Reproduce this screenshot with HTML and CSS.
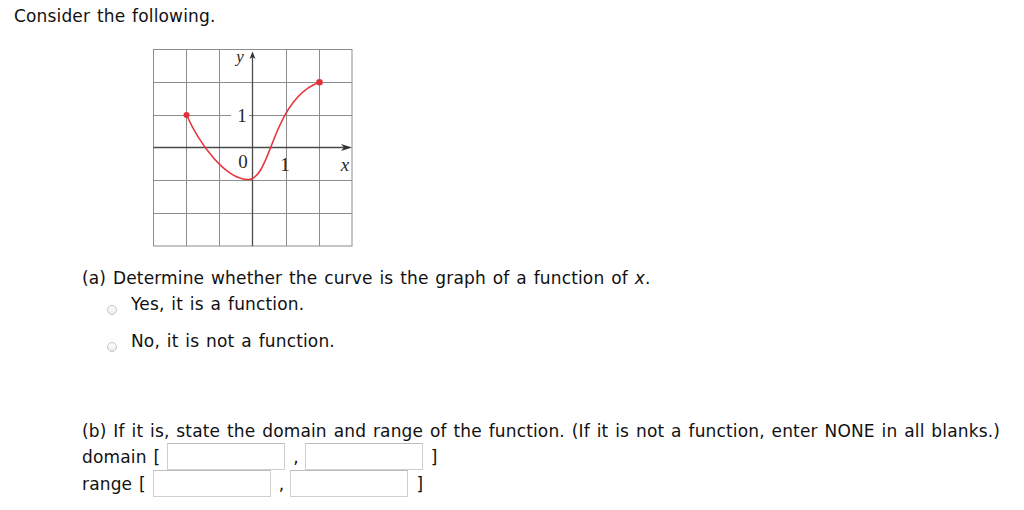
FILE: index.html
```html
<!DOCTYPE html>
<html>
<head>
<meta charset="utf-8">
<link rel="stylesheet" href="styles.css">
</head>
<body>
<div class="page">
  <div class="title">Consider the following.</div>
  <div class="figure">
    <svg class="graph" width="202" height="200" viewBox="152 48 202 200" xmlns="http://www.w3.org/2000/svg">
      <g stroke="#8c8c8c" stroke-width="1" fill="none">
        <line x1="186.5" y1="49.5" x2="186.5" y2="246"/>
        <line x1="219.5" y1="49.5" x2="219.5" y2="246"/>
        <line x1="286.5" y1="49.5" x2="286.5" y2="246"/>
        <line x1="319.5" y1="49.5" x2="319.5" y2="246"/>
        <line x1="153.5" y1="82.5" x2="352" y2="82.5"/>
        <line x1="153.5" y1="115.5" x2="231" y2="115.5"/>
        <line x1="249" y1="115.5" x2="352" y2="115.5"/>
        <line x1="153.5" y1="180.5" x2="352" y2="180.5"/>
        <line x1="153.5" y1="213.5" x2="352" y2="213.5"/>
        <rect x="153.5" y="49.5" width="198.5" height="196.5"/>
      </g>
      <g stroke="#4a4a4a" stroke-width="1.3" fill="none">
        <line x1="252.5" y1="56" x2="252.5" y2="246"/>
        <line x1="153.5" y1="147.5" x2="346" y2="147.5"/>
      </g>
      <path d="M252.5 51.5 L255.5 59 L252.5 57 L249.5 59 Z" fill="#333"/>
      <path d="M352 147.5 L341 144 L344 147.5 L341 151 Z" fill="#333"/>
      <g font-family="'Liberation Serif', 'DejaVu Serif', serif" fill="#2a2a2a" text-anchor="middle">
        <text x="240" y="62" font-size="17" font-style="italic">y</text>
        <text x="242" y="122" font-size="19">1</text>
        <text x="243" y="168" font-size="19">0</text>
        <text x="285" y="171" font-size="19">1</text>
        <text x="345" y="171" font-size="19" font-style="italic">x</text>
      </g>
      <path d="M186.5 115 C 200 145, 225 178, 247 179.5 C 262 181, 268 150, 280 125 C 290 103, 303 88, 319.5 82.3" stroke="#e8333a" stroke-width="1.6" fill="none"/>
      <circle cx="186.5" cy="115" r="3" fill="#e0303a"/>
      <circle cx="319.5" cy="82.3" r="3.3" fill="#e0303a"/>
    </svg>
  </div>
  <div class="question">
    <div class="q-line">(a) Determine whether the curve is the graph of a function of <i>x</i>.</div>
    <label class="choice"><span class="radio"></span><span>Yes, it is a function.</span></label>
    <label class="choice choice-second"><span class="radio"></span><span>No, it is not a function.</span></label>
    <div class="q-line q-b">(b) If it is, state the domain and range of the function. (If it is not a function, enter NONE in all blanks.)</div>
    <div class="row row-first">
      <span>domain [</span><input class="blank blank-first" type="text"><span class="comma">,</span><input class="blank" type="text"><span class="bracket">]</span>
    </div>
    <div class="row">
      <span>range [</span><input class="blank blank-first" type="text"><span class="comma">,</span><input class="blank" type="text"><span class="bracket">]</span>
    </div>
  </div>
</div>
</body>
</html>
```
FILE: styles.css
```css
html, body {
  margin: 0;
  padding: 0;
  background: #fff;
}
body {
  font-family: "DejaVu Sans", Verdana, sans-serif;
  font-size: 17px;
  letter-spacing: 0.15px;
  word-spacing: 1.3px;
  color: #111;
}
.page {
  position: relative;
  width: 1024px;
  height: 510px;
}
.title {
  padding: 6px 0 0 14px;
  line-height: 20px;
}
.figure {
  margin: 22px 0 0 152px;
  height: 200px;
  line-height: 0;
}
.graph {
  overflow: visible;
}
.question {
  padding-left: 82px;
}
.q-line {
  line-height: 22px;
  margin-top: 19px;
}
.q-line i {
  font-style: italic;
}
.choice {
  display: flex;
  align-items: center;
  margin-top: 4px;
  line-height: 22px;
}
.choice-second {
  margin-top: 15px;
}
.radio {
  display: inline-block;
  box-sizing: border-box;
  width: 10px;
  height: 10px;
  margin: 11px 14px 0 25px;
  border: 1px solid #c4c4c4;
  border-radius: 50%;
  background: linear-gradient(#ffffff, #ececec);
}
.q-b {
  margin-top: 68px;
}
.row {
  display: flex;
  align-items: center;
  height: 27px;
}
.row-first {
  margin-top: 1px;
}
.blank {
  box-sizing: border-box;
  width: 118px;
  height: 27px;
  margin: 0;
  padding: 0;
  border: 1px solid #cfcfcf;
  border-top-color: #bdbdbd;
  background: #fff;
  font: inherit;
}
.blank-first {
  margin-left: 7px;
}
.comma {
  margin: 0 6px 0 8px;
}
.bracket {
  margin-left: 8px;
}
```
